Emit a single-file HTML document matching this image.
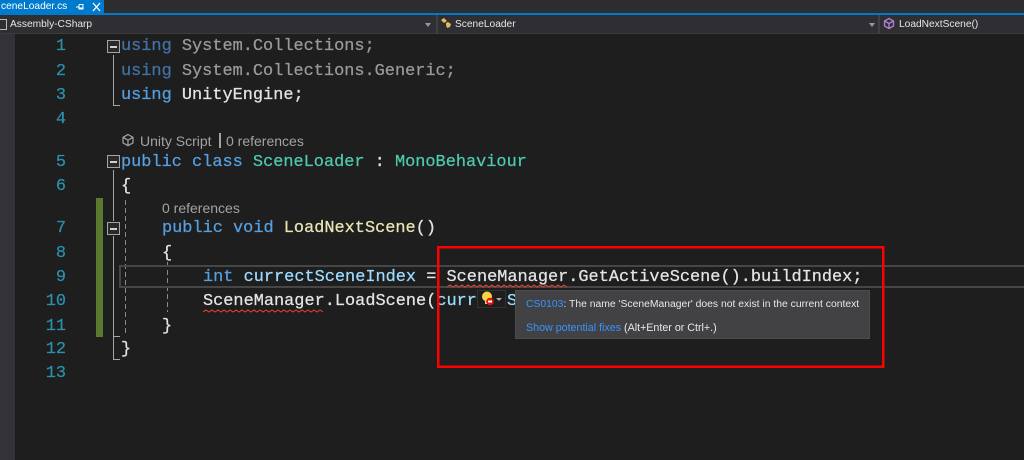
<!DOCTYPE html>
<html><head><meta charset="utf-8">
<style>
html,body{margin:0;padding:0;background:#1e1e1e}
#r{position:relative;width:1024px;height:460px;overflow:hidden;background:#1e1e1e;font-family:"Liberation Sans",sans-serif}
.a{position:absolute}
.c{position:absolute;left:0;font:16.92px/24px "Liberation Mono",monospace;white-space:pre;color:#e4e4e4;-webkit-text-stroke:.25px currentColor}
.n{position:absolute;width:66px;text-align:right;left:0;font:16.92px/24px "Liberation Mono",monospace;color:#2b91af;-webkit-text-stroke:.2px currentColor}
.k{color:#569fe0}.t{color:#4ec9b0}.m{color:#e6e6b4}.v{color:#9cdcfe}.g{color:#9a9a9a}.kf{color:#4272a6}
.l{position:absolute;font-size:14px;line-height:16px;color:#a3a3a3;white-space:pre}
.box{position:absolute;left:107px;width:11px;height:11px;border:1px solid #a5a5a5;background:#2a2a2a;box-sizing:content-box}
.box:after{content:"";position:absolute;left:2px;top:5px;width:7px;height:1.5px;background:#d0d0d0}
.ln{position:absolute;background:#a5a5a5}
.d{position:absolute;width:1px;background:repeating-linear-gradient(#8a8a8a 0 5px,transparent 5px 8px)}
.b{position:absolute;font-size:10.2px;line-height:14px;white-space:pre;color:#e6e6e6}
</style></head><body>
<div id="r">
<!-- tab bar -->
<div class="a" style="left:0;top:0;width:1024px;height:13px;background:#2d2d30"></div>
<div class="a" style="left:0;top:0;width:104px;height:13px;background:#007acc"></div>
<div class="a" style="left:0;top:13px;width:1024px;height:2px;background:#007acc"></div>
<div class="b" style="left:1px;top:0;color:#fff;font-size:10.2px;line-height:13px">ceneLoader.cs</div>
<svg class="a" style="left:74px;top:1px" width="30" height="12"><path d="M2 6h3M5 3.500v5M5 3.500h4v4.500h-4M5 7h4" stroke="#fff" fill="none" stroke-width="1"/><path d="M19 2l7 8M26 2l-7 8" stroke="#fff" stroke-width="1.300"/></svg>
<!-- nav bar -->
<div class="a" style="left:0;top:15px;width:1024px;height:19px;background:#2f2f33"></div>
<div class="a" style="left:0;top:33px;width:1024px;height:1px;background:#3c3c40"></div>
<div class="a" style="left:436px;top:15px;width:2px;height:19px;background:#3f3f44"></div>
<div class="a" style="left:878px;top:15px;width:2px;height:19px;background:#3f3f44"></div>
<div class="a" style="left:-4px;top:19px;width:9px;height:9px;border:1px solid #bbb"></div>
<div class="b" style="left:10px;top:18px">Assembly-CSharp</div>
<div class="a" style="left:425px;top:23px;border:3.500px solid transparent;border-top:4px solid #999;border-bottom:0"></div>
<div class="a" style="left:869px;top:23px;border:3.500px solid transparent;border-top:4px solid #999;border-bottom:0"></div>
<svg class="a" style="left:440px;top:17px" width="14" height="14"><path d="M1 3l3-2 3 3-3 2zM6 6l2-1 3 2-1 3-3 1-1-3z" fill="#e8b860"/></svg>
<div class="b" style="left:455px;top:18px">SceneLoader</div>
<svg class="a" style="left:883px;top:17px" width="12" height="13"><path d="M6 1.500l4.500 2.500v5l-4.500 2.500-4.500-2.500v-5zM6 6.500v5M1.500 4l4.500 2.500 4.500-2.500" fill="none" stroke="#b180d7" stroke-width="1.300"/></svg>
<div class="b" style="left:899px;top:18px">LoadNextScene()</div>
<!-- margin -->
<div class="a" style="left:0;top:34px;width:15px;height:426px;background:#333337"></div>
<div class="a" style="left:96px;top:198px;width:7px;height:139px;background:#5a7a32"></div>
<!-- line numbers -->
<div class="n" style="top:35px">1</div>
<div class="n" style="top:60px">2</div>
<div class="n" style="top:84px">3</div>
<div class="n" style="top:108px">4</div>
<div class="n" style="top:151px">5</div>
<div class="n" style="top:175px">6</div>
<div class="n" style="top:217px">7</div>
<div class="n" style="top:242px">8</div>
<div class="n" style="top:266px">9</div>
<div class="n" style="top:290px">10</div>
<div class="n" style="top:315px">11</div>
<div class="n" style="top:338px">12</div>
<div class="n" style="top:362px">13</div>
<!-- outlining -->
<div class="box" style="top:40px"></div>
<div class="box" style="top:155px"></div>
<div class="box" style="top:222px"></div>
<div class="ln" style="left:113px;top:55px;width:1px;height:51px"></div>
<div class="ln" style="left:113px;top:105px;width:7px;height:1px"></div>
<div class="ln" style="left:113px;top:170px;width:1px;height:51px"></div>
<div class="ln" style="left:113px;top:236px;width:1px;height:124px"></div>
<div class="ln" style="left:113px;top:336px;width:7px;height:1px"></div>
<div class="ln" style="left:113px;top:359px;width:7px;height:1px"></div>
<div class="d" style="left:125px;top:200px;height:134px"></div>
<div class="d" style="left:167px;top:262px;height:50px"></div>
<!-- current line -->
<div class="a" style="left:119px;top:265px;width:905px;height:23px;border:2px solid #464646;border-right:0;box-sizing:border-box"></div>
<!-- code -->
<div class="c" style="left:121px;top:35px"><span class="kf">using</span> <span class="g">System.Collections;</span></div>
<div class="c" style="left:121px;top:60px"><span class="kf">using</span> <span class="g">System.Collections.Generic;</span></div>
<div class="c" style="left:121px;top:84px"><span class="k">using</span> UnityEngine;</div>
<svg class="a" style="left:121px;top:133px" width="14" height="15"><path d="M7 1.500l5 2.800v5.600l-5 2.800-5-2.800v-5.600zM2 4.300l5 2.800 5-2.800M7 7.100v5.600" fill="none" stroke="#a3a3a3" stroke-width="1.200"/></svg>
<div class="l" style="left:140px;top:133px">Unity Script</div>
<div class="a" style="left:219px;top:133px;width:2px;height:15px;background:#a3a3a3"></div>
<div class="l" style="left:226px;top:133px">0 references</div>
<div class="c" style="left:121px;top:151px"><span class="k">public</span> <span class="k">class</span> <span class="t">SceneLoader</span> : <span class="t">MonoBehaviour</span></div>
<div class="c" style="left:121px;top:175px">{</div>
<div class="l" style="left:162px;top:200px">0 references</div>
<div class="c" style="left:162px;top:217px"><span class="k">public</span> <span class="k">void</span> <span class="m">LoadNextScene</span>()</div>
<div class="c" style="left:162px;top:242px">{</div>
<div class="c" style="left:203px;top:266px"><span class="k">int</span> <span class="v">currectSceneIndex</span> = SceneManager.GetActiveScene().buildIndex;</div>
<div class="c" style="left:203px;top:290px">SceneManager.LoadScene(<span class="v">curr</span></div>
<div class="c" style="left:507px;top:290px"><span class="v">S</span></div>
<div class="c" style="left:162px;top:315px">}</div>
<div class="c" style="left:121px;top:338px">}</div>
<!-- squiggles -->
<svg class="a" style="left:203px;top:309px" width="122" height="6"><path d="M0 3l3-2 3 2 3-2 3 2 3-2 3 2 3-2 3 2 3-2 3 2 3-2 3 2 3-2 3 2 3-2 3 2 3-2 3 2 3-2 3 2 3-2 3 2 3-2 3 2 3-2 3 2 3-2 3 2 3-2 3 2 3-2 3 2 3-2 3 2 3-2 3 2 3-2 3 2 3-2 3 2" fill="none" stroke="#e8402c" stroke-width="1"/></svg>
<svg class="a" style="left:447px;top:284px" width="122" height="6"><path d="M0 3l3-2 3 2 3-2 3 2 3-2 3 2 3-2 3 2 3-2 3 2 3-2 3 2 3-2 3 2 3-2 3 2 3-2 3 2 3-2 3 2 3-2 3 2 3-2 3 2 3-2 3 2 3-2 3 2 3-2 3 2 3-2 3 2 3-2 3 2 3-2 3 2 3-2 3 2 3-2 3 2" fill="none" stroke="#e8402c" stroke-width="1"/></svg>
<!-- lightbulb -->
<div class="a" style="left:477px;top:290px;width:29px;height:18px;background:#1e1e1e;border:1px solid #333;box-sizing:border-box"></div>
<svg class="a" style="left:480px;top:290px" width="18" height="18"><circle cx="7" cy="6.500" r="5" fill="#f5d547"/><rect x="5" y="11" width="4" height="3" fill="#ccc"/><circle cx="10" cy="11.500" r="3.800" fill="#e51400"/><rect x="8" y="10.500" width="4" height="2" fill="#fff"/></svg>
<div class="a" style="left:496px;top:298px;border:3px solid transparent;border-top:3px solid #aaa;border-bottom:0"></div>
<!-- tooltip -->
<div class="a" style="left:515px;top:290px;width:355px;height:49px;background:#424245;border:1px solid #4c4c4f;box-sizing:border-box"></div>
<div class="a" style="left:526px;top:296px;font-size:10.36px;line-height:17px;white-space:pre;color:#e8e8e8"><span style="color:#3794ff">CS0103</span>: The name 'SceneManager' does not exist in the current context</div>
<div class="a" style="left:526px;top:320px;font-size:10.7px;line-height:16px;white-space:pre;color:#e8e8e8"><span style="color:#3794ff">Show potential fixes</span> (Alt+Enter or Ctrl+.)</div>
<!-- red annotation -->
<svg class="a" style="left:436px;top:245px" width="450" height="124"><rect x="2.250" y="2.250" width="445" height="119.500" fill="none" stroke="#f00" stroke-width="2.500"/></svg>
</div>
</body></html>
